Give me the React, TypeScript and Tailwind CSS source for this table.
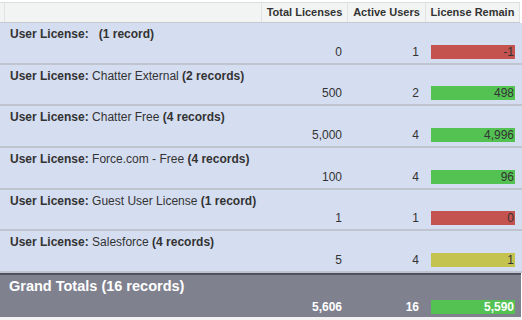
import React from "react";

type Row = {
  name: string;
  count: string;
  total: string;
  active: string;
  remain: string;
  bar: string;
  h: string;
};

const rows: Row[] = [
  { name: "", count: "(1 record)", total: "0", active: "1", remain: "-1", bar: "bg-[#c4524f]", h: "h-[42px]" },
  { name: "Chatter External", count: "(2 records)", total: "500", active: "2", remain: "498", bar: "bg-[#53c253]", h: "h-[41px]" },
  { name: "Chatter Free", count: "(4 records)", total: "5,000", active: "4", remain: "4,996", bar: "bg-[#53c253]", h: "h-[42px]" },
  { name: "Force.com - Free", count: "(4 records)", total: "100", active: "4", remain: "96", bar: "bg-[#53c253]", h: "h-[42px]" },
  { name: "Guest User License", count: "(1 record)", total: "1", active: "1", remain: "0", bar: "bg-[#c4524f]", h: "h-[41px]" },
  { name: "Salesforce", count: "(4 records)", total: "5", active: "4", remain: "1", bar: "bg-[#c4c350]", h: "h-[42px]" },
];

export default function App() {
  return (
    <div
      className="w-[522px] h-[320px] bg-white overflow-hidden text-[12px] text-[#333]"
      style={{ fontFamily: '"Liberation Sans", Arial, sans-serif' }}
    >
      <div className="h-[2px]" />
      {/* Header */}
      <div className="w-[520px] flex h-[21px] bg-[#f2f3f3] border-t border-b border-[#dadcdf] border-b-[#c5c9d3] font-bold leading-[19px] text-[11px]">
        <div className="w-[5px] border-r border-[#e0e2e4]" />
        <div className="w-[257px] border-r border-[#e0e2e4]" />
        <div className="w-[86px] border-r border-[#e0e2e4] text-center">Total Licenses</div>
        <div className="w-[78px] border-r border-[#e0e2e4] text-center">Active Users</div>
        <div className="w-[94px] border-r border-[#e0e2e4] text-center">License Remain</div>
      </div>
      {/* Groups */}
      {rows.map((r, i) => (
        <div key={i} className={`w-[522px] ${r.h} bg-[#d5ddf1] border-b-2 border-[#bfc4ce] flex flex-col`}>
          <div className="h-[21px] pl-[10px] pt-[4px] leading-[14px] flex-none">
            <span className="font-bold">User License:</span>
            {r.name ? <span> {r.name} </span> : <span>&nbsp;&nbsp;&nbsp;</span>}
            <span className="font-bold">{r.count}</span>
          </div>
          <div className="flex-1 flex items-end pb-[4px] leading-[14px]">
            <div className="w-[262px]" />
            <div className="w-[86px] text-right pr-[6px]">{r.total}</div>
            <div className="w-[78px] text-right pr-[7px]">{r.active}</div>
            <div className="w-[94px] pl-[5px] pr-[5px]">
              <div className={`${r.bar} h-[14px] text-right pr-[1px] text-[#333]`}>{r.remain}</div>
            </div>
          </div>
        </div>
      ))}
      {/* Grand totals */}
      <div className="w-[521px] h-[44px] bg-[#7f818f] border-t-2 border-[#50515d] flex flex-col text-white font-bold">
        <div className="h-[21px] pl-[9px] pt-[3px] leading-[17px] text-[14.5px] flex-none">Grand Totals (16 records)</div>
        <div className="flex-1 flex items-end pb-[3px] leading-[14px]">
          <div className="w-[262px]" />
          <div className="w-[86px] text-right pr-[6px]">5,606</div>
          <div className="w-[78px] text-right pr-[7px]">16</div>
          <div className="w-[94px] pl-[5px] pr-[5px]">
            <div className="bg-[#53c253] h-[14px] text-right pr-[1px]">5,590</div>
          </div>
        </div>
      </div>
      <div className="h-[3px] bg-[#f3f3f3]" />
    </div>
  );
}
